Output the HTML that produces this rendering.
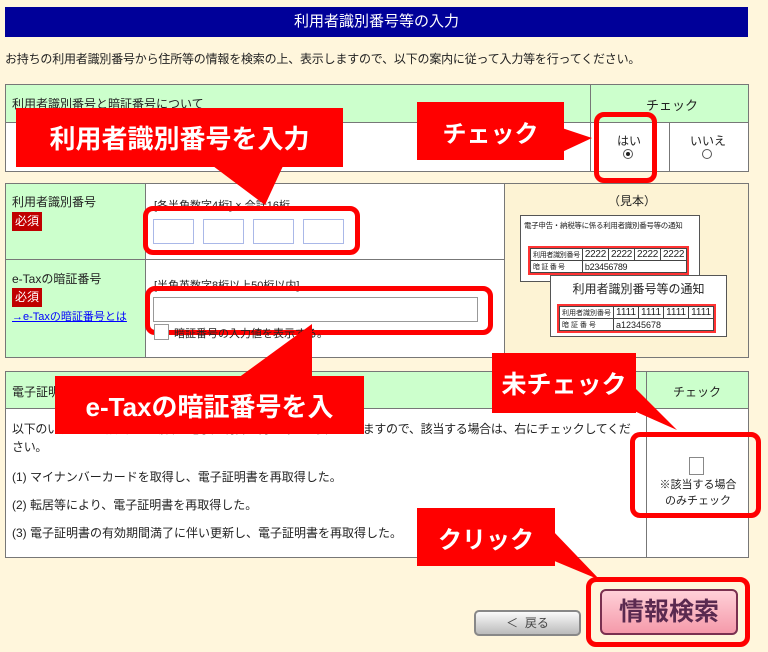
<!DOCTYPE html>
<html><head><meta charset="utf-8"><style>
*{margin:0;padding:0;box-sizing:border-box}
body{width:768px;height:652px;background:#fff6dc;font-family:"Liberation Sans","Noto Sans CJK JP",sans-serif;font-size:12px;color:#222;position:relative;overflow:hidden}
.a{position:absolute}
.g{background:#ccffcc}
.w{background:#fff}
.bd{border:1px solid #777}
.hi{background:#c00000;color:#fff;font-size:12px;padding:2px 3px;line-height:15px}
.red{background:#f00;color:#fff;font-weight:bold;display:flex;align-items:center;justify-content:center;white-space:nowrap}
.ol{border:5px solid #f00;border-radius:10px}
.inp{border:1px solid #aab8e8;background:#fff}
.dt{border-collapse:collapse;font-size:7px}
.dt td{border:1px solid #444;padding:0 2px;height:12px;background:#fff;white-space:nowrap}
</style></head><body>
<div class="a" style="left:5px;top:7px;width:743px;height:30px;background:#000099;color:#fff;font-size:15px;text-align:center;line-height:30px">利用者識別番号等の入力</div>
<div class="a" style="left:5px;top:50px;font-size:12px;letter-spacing:-0.2px">お持ちの利用者識別番号から住所等の情報を検索の上、表示しますので、以下の案内に従って入力等を行ってください。</div>

<!-- table1 -->
<div class="a bd g" style="left:5px;top:84px;width:744px;height:88px"></div>
<div class="a w" style="left:6px;top:122px;width:742px;height:49px;border-top:1px solid #777"></div>
<div class="a" style="left:590px;top:84px;width:1px;height:88px;background:#777"></div>
<div class="a" style="left:669px;top:122px;width:1px;height:49px;background:#777"></div>
<div class="a" style="left:12px;top:95px;font-size:12px">利用者識別番号と暗証番号について</div>
<div class="a" style="left:646px;top:95px;font-size:13px">チェック</div>
<div class="a" style="left:617px;top:132px;font-size:12px">はい</div>
<div class="a" style="left:623px;top:149px;width:10px;height:10px;border:1px solid #555;border-radius:50%;background:#fff"><div style="margin:2px;width:4px;height:4px;border-radius:50%;background:#222"></div></div>
<div class="a" style="left:690px;top:132px;font-size:12px">いいえ</div>
<div class="a" style="left:702px;top:149px;width:10px;height:10px;border:1px solid #555;border-radius:50%;background:#fff"></div>

<!-- table2 -->
<div class="a bd w" style="left:5px;top:183px;width:744px;height:175px"></div>
<div class="a g" style="left:6px;top:184px;width:140px;height:173px;border-right:1px solid #777"></div>
<div class="a" style="left:504px;top:184px;width:244px;height:173px;background:#fdf3d4;border-left:1px solid #777"></div>
<div class="a" style="left:6px;top:259px;width:498px;height:1px;background:#777"></div>
<div class="a" style="left:12px;top:193px;font-size:12px">利用者識別番号</div>
<div class="a hi" style="left:12px;top:212px">必須</div>
<div class="a" style="left:154px;top:197px;font-size:11px">[各半角数字4桁] × 合計16桁</div>
<div class="a inp" style="left:153px;top:219px;width:41px;height:25px"></div>
<div class="a inp" style="left:203px;top:219px;width:41px;height:25px"></div>
<div class="a inp" style="left:253px;top:219px;width:41px;height:25px"></div>
<div class="a inp" style="left:303px;top:219px;width:41px;height:25px"></div>
<div class="a ol" style="left:143px;top:206px;width:217px;height:49px"></div>
<div class="a" style="left:12px;top:270px;font-size:12px">e-Taxの暗証番号</div>
<div class="a hi" style="left:12px;top:288px">必須</div>
<div class="a" style="left:12px;top:308px;font-size:11px;color:#00f;text-decoration:underline">→e-Taxの暗証番号とは</div>
<div class="a" style="left:154px;top:277px;font-size:11px">[半角英数字8桁以上50桁以内]</div>
<div class="a" style="left:153px;top:297px;width:325px;height:25px;border:1px solid #999;background:#fff"></div>
<div class="a ol" style="left:145px;top:286px;width:348px;height:49px"></div>
<div class="a" style="left:154px;top:324px;width:15px;height:16px;border:1px solid #999;background:#fff"></div>
<div class="a" style="left:174px;top:325px;font-size:11px">暗証番号の入力値を表示する。</div>
<div class="a" style="left:608px;top:192px;font-size:12px">（見本）</div>
<div class="a" style="left:520px;top:215px;width:180px;height:67px;background:#fff;border:1px solid #555;font-size:7.5px;padding:4px 3px;white-space:nowrap;letter-spacing:-0.3px">電子申告・納税等に係る利用者識別番号等の通知
<div style="position:absolute;left:7px;top:30px;border:2px solid #f33"><table class="dt"><tr><td>利用者識別番号</td><td style="font-size:10px">2222</td><td style="font-size:10px">2222</td><td style="font-size:10px">2222</td><td style="font-size:10px">2222</td></tr><tr><td>暗 証 番 号</td><td colspan="4" style="font-size:9px">b23456789</td></tr></table></div></div>
<div class="a" style="left:550px;top:275px;width:177px;height:62px;background:#fff;border:1px solid #555;font-size:12px;text-align:center;padding-top:4px">利用者識別番号等の通知
<div style="position:absolute;left:6px;top:28px;border:2px solid #f33;text-align:left"><table class="dt"><tr><td>利用者識別番号</td><td style="font-size:10px">1111</td><td style="font-size:10px">1111</td><td style="font-size:10px">1111</td><td style="font-size:10px">1111</td></tr><tr><td>暗 証 番 号</td><td colspan="4" style="font-size:9px">a12345678</td></tr></table></div></div>

<!-- table3 -->
<div class="a bd w" style="left:5px;top:371px;width:744px;height:187px"></div>
<div class="a g" style="left:6px;top:372px;width:742px;height:37px;border-bottom:1px solid #777"></div>
<div class="a" style="left:646px;top:372px;width:1px;height:185px;background:#777"></div>
<div class="a" style="left:12px;top:383px;font-size:12px">電子証明書を再取得した場合の<span style="color:#00f;text-decoration:underline">→電子証明書とは</span></div>
<div class="a" style="left:673px;top:383px;font-size:12px">チェック</div>
<div class="a" style="left:12px;top:420px;width:630px;font-size:12px;line-height:18px;letter-spacing:-0.3px">以下のいずれかに該当する場合、電子証明書の再登録が必要となりますので、該当する場合は、右にチェックしてください。</div>
<div class="a" style="left:12px;top:468px;font-size:12px">(1) マイナンバーカードを取得し、電子証明書を再取得した。</div>
<div class="a" style="left:12px;top:496px;font-size:12px">(2) 転居等により、電子証明書を再取得した。</div>
<div class="a" style="left:12px;top:524px;font-size:12px">(3) 電子証明書の有効期間満了に伴い更新し、電子証明書を再取得した。</div>
<div class="a" style="left:689px;top:457px;width:15px;height:18px;border:1px solid #888;background:#fff"></div>
<div class="a" style="left:648px;top:477px;width:100px;text-align:center;font-size:11px;line-height:16px">※該当する場合<br>のみチェック</div>
<div class="a ol" style="left:630px;top:432px;width:131px;height:86px"></div>

<!-- buttons -->
<div class="a" style="left:474px;top:610px;width:107px;height:26px;border:2px solid #888;border-radius:5px;background:linear-gradient(#fafafa,#bbb);font-size:12px;text-align:center;line-height:22px;color:#444">＜&nbsp;&nbsp;戻る</div>
<div class="a" style="left:600px;top:589px;width:138px;height:46px;border:2px solid #7a3050;border-radius:6px;background:linear-gradient(#ffd0d8,#f59aaa);font-size:25px;text-align:center;line-height:42px;color:#5a2a50;font-weight:bold">情報検索</div>
<div class="a ol" style="left:586px;top:577px;width:164px;height:70px"></div>

<!-- callouts -->
<svg class="a" style="left:0;top:0" width="768" height="652">
<polygon points="213,166 283,166 265,205" fill="#f00"/>
<polygon points="562,128 562,152 592,138" fill="#f00"/>
<polygon points="238,378 312,378 312,324" fill="#f00"/>
<polygon points="632,385 632,410 677,430" fill="#f00"/>
<polygon points="552,530 552,560 600,580" fill="#f00"/>
</svg>
<div class="a red" style="left:16px;top:108px;width:327px;height:59px;font-size:26px">利用者識別番号を入力</div>
<div class="a red" style="left:417px;top:102px;width:147px;height:58px;font-size:24px">チェック</div>
<div class="a red" style="left:55px;top:376px;width:309px;height:58px;font-size:26px">e-Taxの暗証番号を入</div>
<div class="a red" style="left:492px;top:353px;width:144px;height:60px;font-size:25px">未チェック</div>
<div class="a red" style="left:417px;top:508px;width:138px;height:58px;font-size:24px">クリック</div>
<div class="a ol" style="left:594px;top:112px;width:63px;height:71px"></div>
</body></html>
